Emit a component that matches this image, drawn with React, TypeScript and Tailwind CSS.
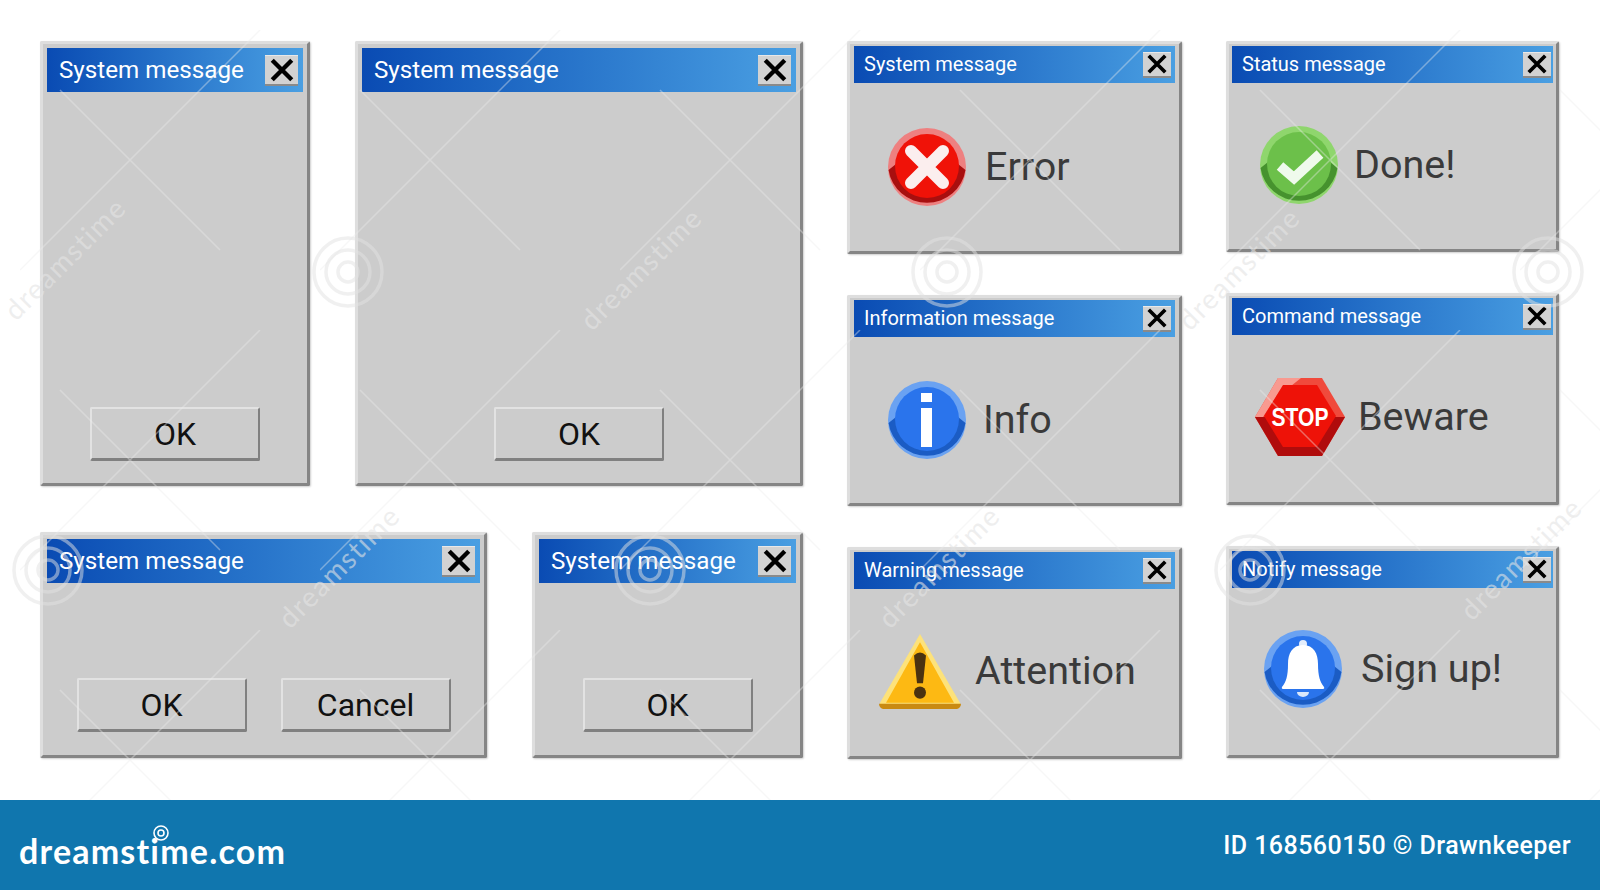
import type { ReactNode } from 'react';

const font = { fontFamily: 'Roboto, "Liberation Sans", sans-serif' };

function CloseButton({ large }: { large?: boolean }) {
  return (
    <div
      className={`flex items-center justify-center bg-[#d2d2d2] border-b-2 border-b-[#8a8a8a] border-t border-t-[#e8e8e8] ${
        large ? 'w-[33px] h-[31px]' : 'w-[28px] h-[26px]'
      }`}
    >
      <svg viewBox="0 0 24 24" className={large ? 'w-[26px] h-[26px]' : 'w-[22px] h-[22px]'}>
        <path d="M3 3 L21 21 M21 3 L3 21" stroke="#000" strokeWidth="4" fill="none" />
      </svg>
    </div>
  );
}

function Win({
  title,
  large,
  wide,
  className,
  children,
}: {
  title: string;
  large?: boolean;
  wide?: boolean;
  className: string;
  children: ReactNode;
}) {
  let barSize = 'mx-[4px] mt-[2px] h-[37px] pl-[10px] pr-[4px] text-[20px]';
  if (large) barSize = 'mx-[4px] mt-[4px] h-[44px] pl-[12px] pr-[5px] text-[24.2px]';
  if (wide) barSize = 'mx-[3px] mt-[2px] h-[37px] pl-[10px] pr-[2px] text-[20px]';

  return (
    <div
      className={`flex flex-col bg-[#cccccc] rounded-[2px] border-t-[3px] border-l-[3px] border-t-[#dedede] border-l-[#dedede] border-r-[3px] border-b-[3px] border-r-[#858585] border-b-[#858585] shadow-[1px_1px_2px_rgba(0,0,0,0.2)] ${className}`}
    >
      <div className={`flex items-center justify-between bg-gradient-to-r from-[#0a4bb3] to-[#4a9fe2] text-white ${barSize}`}>
        <span className={large ? '' : 'pb-[2px]'}>{title}</span>
        <CloseButton large={large} />
      </div>
      {children}
    </div>
  );
}

function Btn({ label }: { label: string }) {
  return (
    <div className="flex items-center justify-center w-[170px] h-[54px] bg-[#cccccc] border-t-2 border-l-2 border-t-[#e2e2e2] border-l-[#e2e2e2] border-r-2 border-b-[3px] border-r-[#808080] border-b-[#808080] rounded-[2px] text-[32px] text-[#111]">
      {label}
    </div>
  );
}

function ErrorIcon() {
  return (
    <svg viewBox="0 0 78 78" className="w-[78px] h-[78px] shrink-0">
      <circle cx="39" cy="39" r="39" fill="#ee8080" />
      <path d="M0.5 42 A39 39 0 0 0 77.5 42 L70 36 A31 31 0 0 1 8 36 Z" fill="#a80f0f" />
      <circle cx="39" cy="38" r="32" fill="#f01208" />
      <path d="M23 23 L55 55 M55 23 L23 55" stroke="#fbeeee" strokeWidth="12" strokeLinecap="round" fill="none" />
    </svg>
  );
}

function DoneIcon() {
  return (
    <svg viewBox="0 0 78 78" className="w-[78px] h-[78px] shrink-0">
      <circle cx="39" cy="39" r="39" fill="#8fd66d" />
      <path d="M0.5 42 A39 39 0 0 0 77.5 42 L70 36 A31 31 0 0 1 8 36 Z" fill="#46922e" />
      <circle cx="39" cy="38" r="32" fill="#6cc04a" />
      <path d="M20 40 L34 52 L60 28" stroke="#effaec" strokeWidth="10" strokeLinejoin="miter" fill="none" />
    </svg>
  );
}

function InfoIcon() {
  return (
    <svg viewBox="0 0 78 78" className="w-[78px] h-[78px] shrink-0">
      <circle cx="39" cy="39" r="39" fill="#6aa2f2" />
      <path d="M0.5 42 A39 39 0 0 0 77.5 42 L70 36 A31 31 0 0 1 8 36 Z" fill="#1b5cc4" />
      <circle cx="39" cy="38" r="32" fill="#2a74ec" />
      <rect x="33" y="12" width="11" height="9" fill="#fff" />
      <rect x="33" y="27" width="11" height="39" fill="#fff" />
    </svg>
  );
}

function StopIcon() {
  return (
    <svg viewBox="0 0 90 78" className="w-[90px] h-[78px] shrink-0">
      <polygon points="23,0 67,0 90,39 67,78 23,78 0,39" fill="#f04a3c" />
      <polygon points="23,0 46,0 36,8 28,8 8,39 0,39" fill="#f89a90" />
      <polygon points="0,39 90,39 67,78 23,78" fill="#b00c0c" />
      <polygon points="28,7 62,7 81,38 62,69 28,69 9,38" fill="#ee1208" />
      <text x="45" y="48" textAnchor="middle" fontFamily="'Liberation Sans', sans-serif" fontWeight="700" fontSize="25" fill="#fff" textLength="57" lengthAdjust="spacingAndGlyphs">
        STOP
      </text>
    </svg>
  );
}

function WarnIcon() {
  return (
    <svg viewBox="0 0 82 74" preserveAspectRatio="none" className="w-[82px] h-[76px] shrink-0">
      <path d="M41 1 L81 68 Q82 72 78 74 L4 74 Q0 72 1 68 Z" fill="#fde27a" />
      <path d="M0 69 L82 69 Q82 73 78 74 L4 74 Q0 73 0 69 Z" fill="#c98a12" />
      <path d="M41 9 L75 68 L7 68 Z" fill="#fdb913" />
      <path d="M35 22 Q41 16 47 22 L44 49 L38 49 Z" fill="#4a3210" />
      <circle cx="41" cy="58" r="6" fill="#4a3210" />
    </svg>
  );
}

function BellIcon() {
  return (
    <svg viewBox="0 0 78 78" className="w-[78px] h-[78px] shrink-0">
      <circle cx="39" cy="39" r="39" fill="#6aa2f2" />
      <path d="M0.5 42 A39 39 0 0 0 77.5 42 L70 36 A31 31 0 0 1 8 36 Z" fill="#1b5cc4" />
      <circle cx="39" cy="38" r="32" fill="#2a74ec" />
      <circle cx="39" cy="14" r="4" fill="#e4eefc" />
      <path d="M39 15 C28 15 24 24 24 34 C24 46 22 52 18 57 Q17 59 20 59 L58 59 Q61 59 60 57 C56 52 54 46 54 34 C54 24 50 15 39 15 Z" fill="#fff" />
      <path d="M33 62 A6 5 0 0 0 45 62 Z" fill="#dbe8fb" />
    </svg>
  );
}

function StatusBody({ icon, text, className }: { icon: ReactNode; text: string; className: string }) {
  return (
    <div className={`flex-1 flex items-center text-[39.5px] text-[#3a3a3a] ${className}`}>
      {icon}
      <span>{text}</span>
    </div>
  );
}

function Watermark() {
  const spirals = [
    [348, 272],
    [947, 272],
    [1548, 272],
    [48, 570],
    [650, 570],
    [1250, 570],
  ];
  const marks = [
    [16, 322],
    [592, 332],
    [1190, 332],
    [290, 630],
    [890, 630],
    [1472, 622],
  ];
  return (
    <svg className="absolute inset-0 pointer-events-none" width="1600" height="800">
      <defs>
        <pattern id="wm" width="300" height="300" patternUnits="userSpaceOnUse" patternTransform="translate(20 30)">
          <path d="M0 240 L240 0 M40 60 L200 220" stroke="rgba(235,235,235,0.4)" strokeWidth="1.5" fill="none" />
        </pattern>
      </defs>
      <rect x="0" y="0" width="1600" height="800" fill="url(#wm)" />
      {spirals.map(([x, y]) => (
        <g key={`${x}-${y}`} fill="none" stroke="rgba(225,225,225,0.5)" strokeWidth="3.5">
          <circle cx={x} cy={y} r="34" />
          <circle cx={x} cy={y} r="22" />
          <circle cx={x} cy={y} r="10" />
        </g>
      ))}
      {marks.map(([x, y]) => (
        <text
          key={`${x}-${y}`}
          x={x}
          y={y}
          transform={`rotate(-45 ${x} ${y})`}
          fontFamily="Lato, sans-serif"
          fontSize="28"
          letterSpacing="1.5"
          fill="rgba(228,228,228,0.6)"
        >
          dreamstime
        </text>
      ))}
    </svg>
  );
}

export default function App() {
  return (
    <div className="w-[1600px] h-[890px] flex flex-col bg-white overflow-hidden" style={font}>
      <div className="relative h-[800px] flex pl-[40px] pt-[41px]">
        <div className="w-[763px] flex flex-col gap-[46px]">
          <div className="flex justify-between">
            <Win title="System message" large className="w-[270px] h-[445px]">
              <div className="flex-1 flex items-end justify-center pb-[22px]">
                <Btn label="OK" />
              </div>
            </Win>
            <Win title="System message" large className="w-[448px] h-[445px]">
              <div className="flex-1 flex items-end justify-center pb-[22px]">
                <Btn label="OK" />
              </div>
            </Win>
          </div>
          <div className="flex justify-between">
            <Win title="System message" large className="w-[447px] h-[226px]">
              <div className="flex-1 flex items-end justify-center gap-[34px] pb-[23px]">
                <Btn label="OK" />
                <Btn label="Cancel" />
              </div>
            </Win>
            <Win title="System message" large className="w-[271px] h-[226px]">
              <div className="flex-1 flex items-end justify-center pb-[23px]">
                <Btn label="OK" />
              </div>
            </Win>
          </div>
        </div>
        <div className="ml-[44px] w-[335px] flex flex-col">
          <Win title="System message" className="w-[335px] h-[213px]">
            <StatusBody icon={<ErrorIcon />} text="Error" className="pl-[38px] gap-[19px] pb-[1px]" />
          </Win>
          <Win title="Information message" className="w-[335px] h-[211px] mt-[41px]">
            <StatusBody icon={<InfoIcon />} text="Info" className="pl-[38px] gap-[17px]" />
          </Win>
          <Win title="Warning message" className="w-[335px] h-[212px] mt-[41px]">
            <StatusBody icon={<WarnIcon />} text="Attention" className="pl-[29px] gap-[14px] pb-[4px]" />
          </Win>
        </div>
        <div className="ml-[44px] w-[333px] flex flex-col">
          <Win title="Status message" wide className="w-[333px] h-[211px]">
            <StatusBody icon={<DoneIcon />} text="Done!" className="pl-[31px] gap-[16px] pb-[2px]" />
          </Win>
          <Win title="Command message" wide className="w-[333px] h-[212px] mt-[41px]">
            <StatusBody icon={<StopIcon />} text="Beware" className="pl-[26px] gap-[13px] pb-[4px]" />
          </Win>
          <Win title="Notify message" wide className="w-[333px] h-[212px] mt-[41px]">
            <StatusBody icon={<BellIcon />} text="Sign up!" className="pl-[35px] gap-[19px] pb-[6px]" />
          </Win>
        </div>
        <Watermark />
      </div>
      <div className="h-[90px] bg-[#1076ae] flex items-center justify-between pl-[19px] pr-[29px] text-white">
        <div className="relative pt-[12px] text-[34px] leading-none font-bold tracking-[1.2px]" style={{ fontFamily: 'Lato, sans-serif' }}>
          dreamstime.com
          <svg viewBox="0 0 16 16" className="absolute left-[134px] top-[3px] w-[16px] h-[16px]">
            <circle cx="8" cy="8" r="7" fill="#1076ae" stroke="#fff" strokeWidth="1.6" />
            <circle cx="8" cy="8" r="3" fill="none" stroke="#fff" strokeWidth="1.6" />
          </svg>
        </div>
        <div className="pt-[2px] text-[25px] font-medium tracking-[0.45px]">ID 168560150 © Drawnkeeper</div>
      </div>
    </div>
  );
}
